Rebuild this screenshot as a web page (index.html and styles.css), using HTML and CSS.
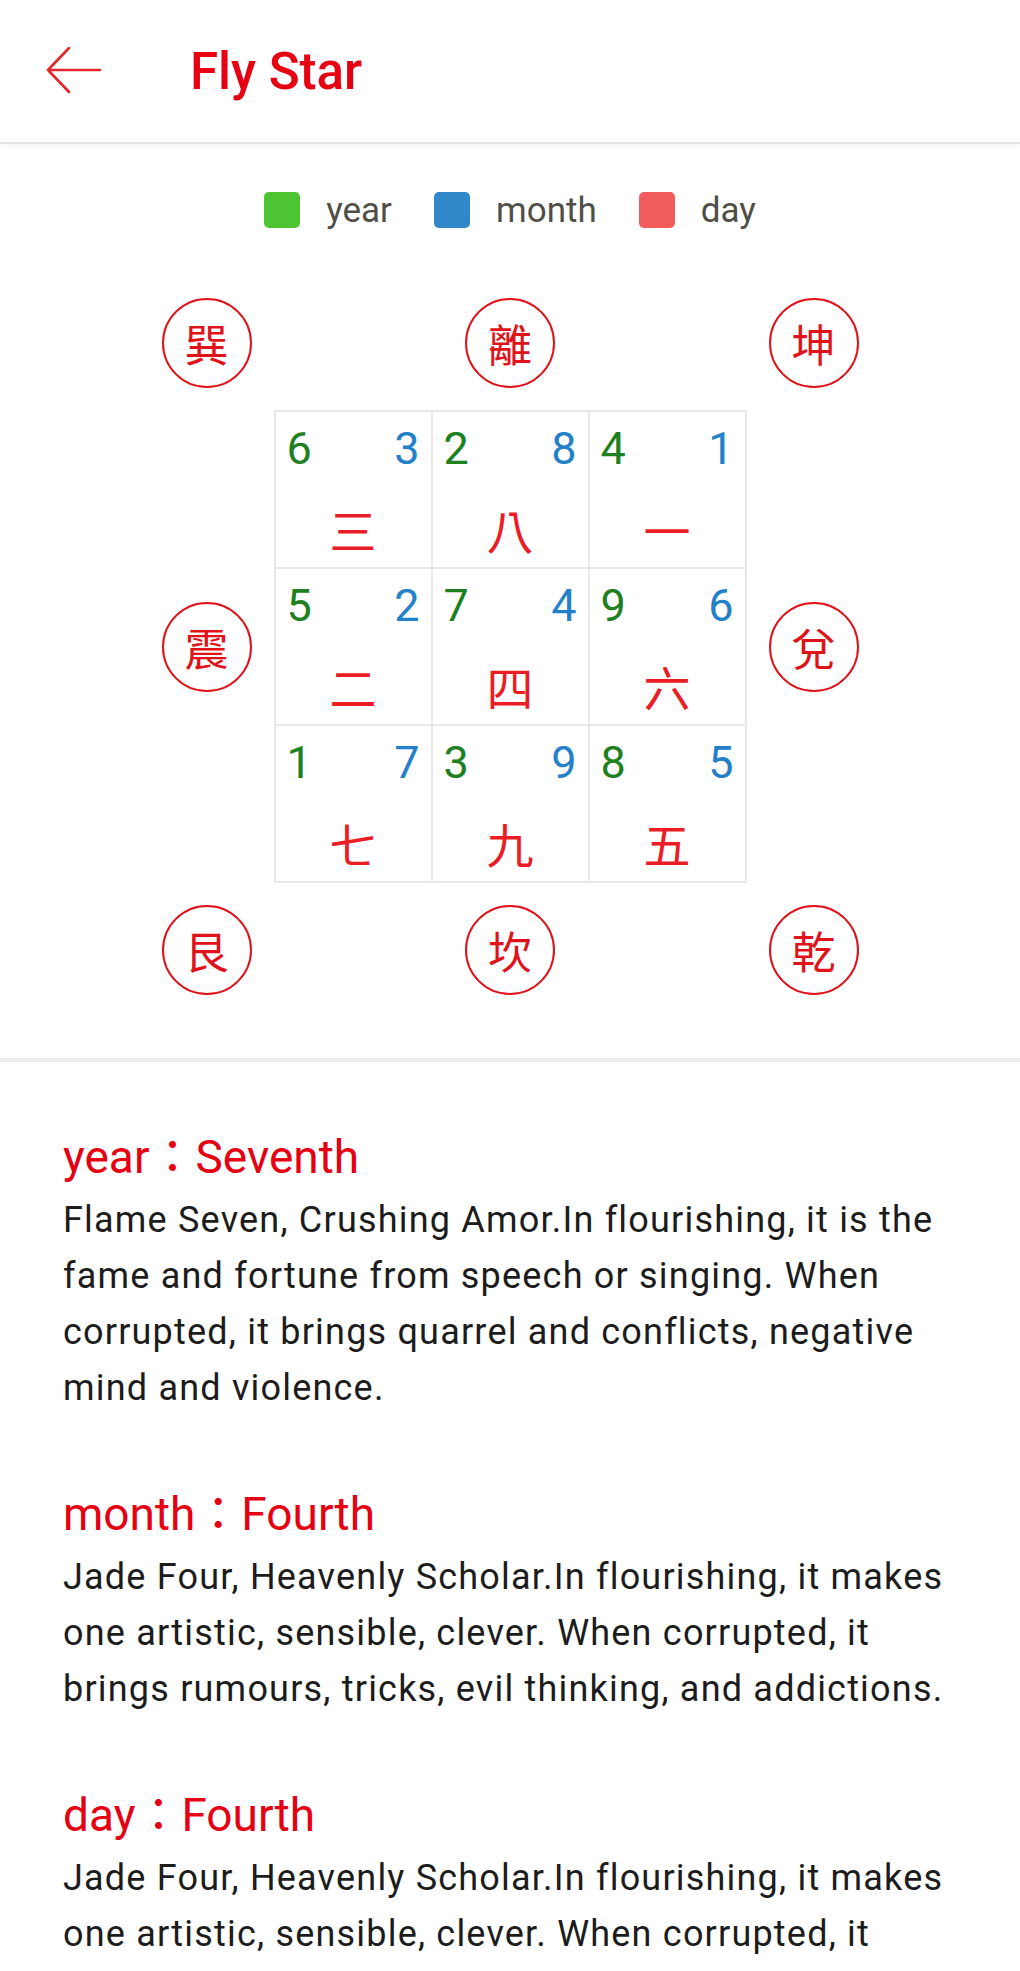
FILE: index.html
```html
<!DOCTYPE html>
<html lang="en">
<head>
    <meta charset="UTF-8">
    <meta name="viewport" content="width=device-width, initial-scale=1.0">
    <title>Fly Star</title>
    <link rel="stylesheet" href="styles.css">
</head>
<body>
    <header class="toolbar">
        <a class="back" href="#">
            <svg width="56" height="48" viewBox="0 0 56 48">
                <path d="M2 23 H54 M23 1 L2 23 L23 45" fill="none" stroke="#e5262d" stroke-width="2.6" stroke-linecap="round" stroke-linejoin="round"/>
            </svg>
        </a>
        <h1 class="title">Fly Star</h1>
    </header>

    <section class="chart">
        <div class="legend">
            <span class="legend-item"><i class="swatch swatch-year"></i>year</span>
            <span class="legend-item"><i class="swatch swatch-month"></i>month</span>
            <span class="legend-item"><i class="swatch swatch-day"></i>day</span>
        </div>

        <div class="compass">
            <div class="gua">巽</div>
            <div class="gua">離</div>
            <div class="gua">坤</div>
            <div class="gua">震</div>
            <div class="board">
                <div class="cell"><div class="nums"><span class="y">6</span><span class="m">3</span></div><div class="d">三</div></div>
                <div class="cell"><div class="nums"><span class="y">2</span><span class="m">8</span></div><div class="d">八</div></div>
                <div class="cell"><div class="nums"><span class="y">4</span><span class="m">1</span></div><div class="d">一</div></div>
                <div class="cell"><div class="nums"><span class="y">5</span><span class="m">2</span></div><div class="d">二</div></div>
                <div class="cell"><div class="nums"><span class="y">7</span><span class="m">4</span></div><div class="d">四</div></div>
                <div class="cell"><div class="nums"><span class="y">9</span><span class="m">6</span></div><div class="d">六</div></div>
                <div class="cell"><div class="nums"><span class="y">1</span><span class="m">7</span></div><div class="d">七</div></div>
                <div class="cell"><div class="nums"><span class="y">3</span><span class="m">9</span></div><div class="d">九</div></div>
                <div class="cell"><div class="nums"><span class="y">8</span><span class="m">5</span></div><div class="d">五</div></div>
            </div>
            <div class="gua">兌</div>
            <div class="gua">艮</div>
            <div class="gua">坎</div>
            <div class="gua">乾</div>
        </div>
    </section>

    <section class="notes">
        <div class="note">
            <h2>year：Seventh</h2>
            <p>Flame Seven, Crushing Amor.In flourishing, it is the fame and fortune from speech or singing. When corrupted, it brings quarrel and conflicts, negative mind and violence.</p>
        </div>
        <div class="note">
            <h2>month：Fourth</h2>
            <p>Jade Four, Heavenly Scholar.In flourishing, it makes one artistic, sensible, clever. When corrupted, it brings rumours, tricks, evil thinking, and addictions.</p>
        </div>
        <div class="note">
            <h2>day：Fourth</h2>
            <p>Jade Four, Heavenly Scholar.In flourishing, it makes one artistic, sensible, clever. When corrupted, it brings rumours, tricks, evil thinking, and addictions.</p>
        </div>
    </section>
</body>
</html>
```

FILE: styles.css
```css
body {
    margin: 0;
    background: #fff;
    font-family: Roboto, "Noto Sans CJK TC", sans-serif;
    color: #222;
}

.toolbar {
    display: flex;
    align-items: center;
    height: 142px;
    padding-left: 46px;
    border-bottom: 2px solid #e4e4e4;
    box-shadow: 0 2px 3px rgba(0, 0, 0, 0.04);
}

.back {
    display: flex;
    width: 56px;
    height: 48px;
}

.title {
    margin: 0 0 0 88px;
    font-size: 51px;
    font-weight: 500;
    color: #e60012;
}

.chart {
    padding: 48px 0 63px;
    border-bottom: 4px solid #ececec;
}

.legend {
    display: flex;
    justify-content: center;
    gap: 42px;
    height: 36px;
}

.legend-item {
    display: flex;
    align-items: center;
    gap: 26px;
    font-size: 35px;
    color: #4f4f47;
}

.swatch {
    width: 36px;
    height: 36px;
    border-radius: 5px;
}

.swatch-year { background: #4dc533; }
.swatch-month { background: #2e88c9; }
.swatch-day { background: #f25b5b; }

.compass {
    display: grid;
    grid-template-columns: 90px 473px 90px;
    grid-template-rows: 90px 473px 90px;
    gap: 22px;
    justify-content: center;
    margin-top: 70px;
}

.gua {
    justify-self: center;
    align-self: center;
    width: 86px;
    height: 86px;
    border: 2px solid #e0121a;
    border-radius: 50%;
    font-family: "Noto Sans CJK TC", sans-serif;
    font-size: 44px;
    line-height: 86px;
    text-align: center;
    color: #e0121a;
}

.board {
    display: grid;
    grid-template-columns: repeat(3, 155px);
    grid-template-rows: repeat(3, 155px);
    gap: 2px;
    padding: 2px;
    background: #e8e8e8;
}

.cell {
    background: #fff;
}

.nums {
    display: flex;
    justify-content: space-between;
    padding: 14px 11px 0;
    font-size: 45px;
    line-height: 45px;
}

.y { color: #1d8021; }
.m { color: #2381c9; }

.d {
    margin-top: 30px;
    font-family: "Noto Sans CJK TC", sans-serif;
    font-size: 47px;
    line-height: 56px;
    text-align: center;
    color: #ec1c24;
}

.notes {
    padding: 67px 63px 0;
}

.note {
    margin-bottom: 70px;
}

.note h2 {
    margin: 0 0 7px;
    font-size: 46px;
    font-weight: 400;
    line-height: 56px;
    color: #e60012;
}

.note p {
    margin: 0;
    font-size: 36px;
    line-height: 56px;
    letter-spacing: 1.2px;
    color: #1c1c1c;
}
```
